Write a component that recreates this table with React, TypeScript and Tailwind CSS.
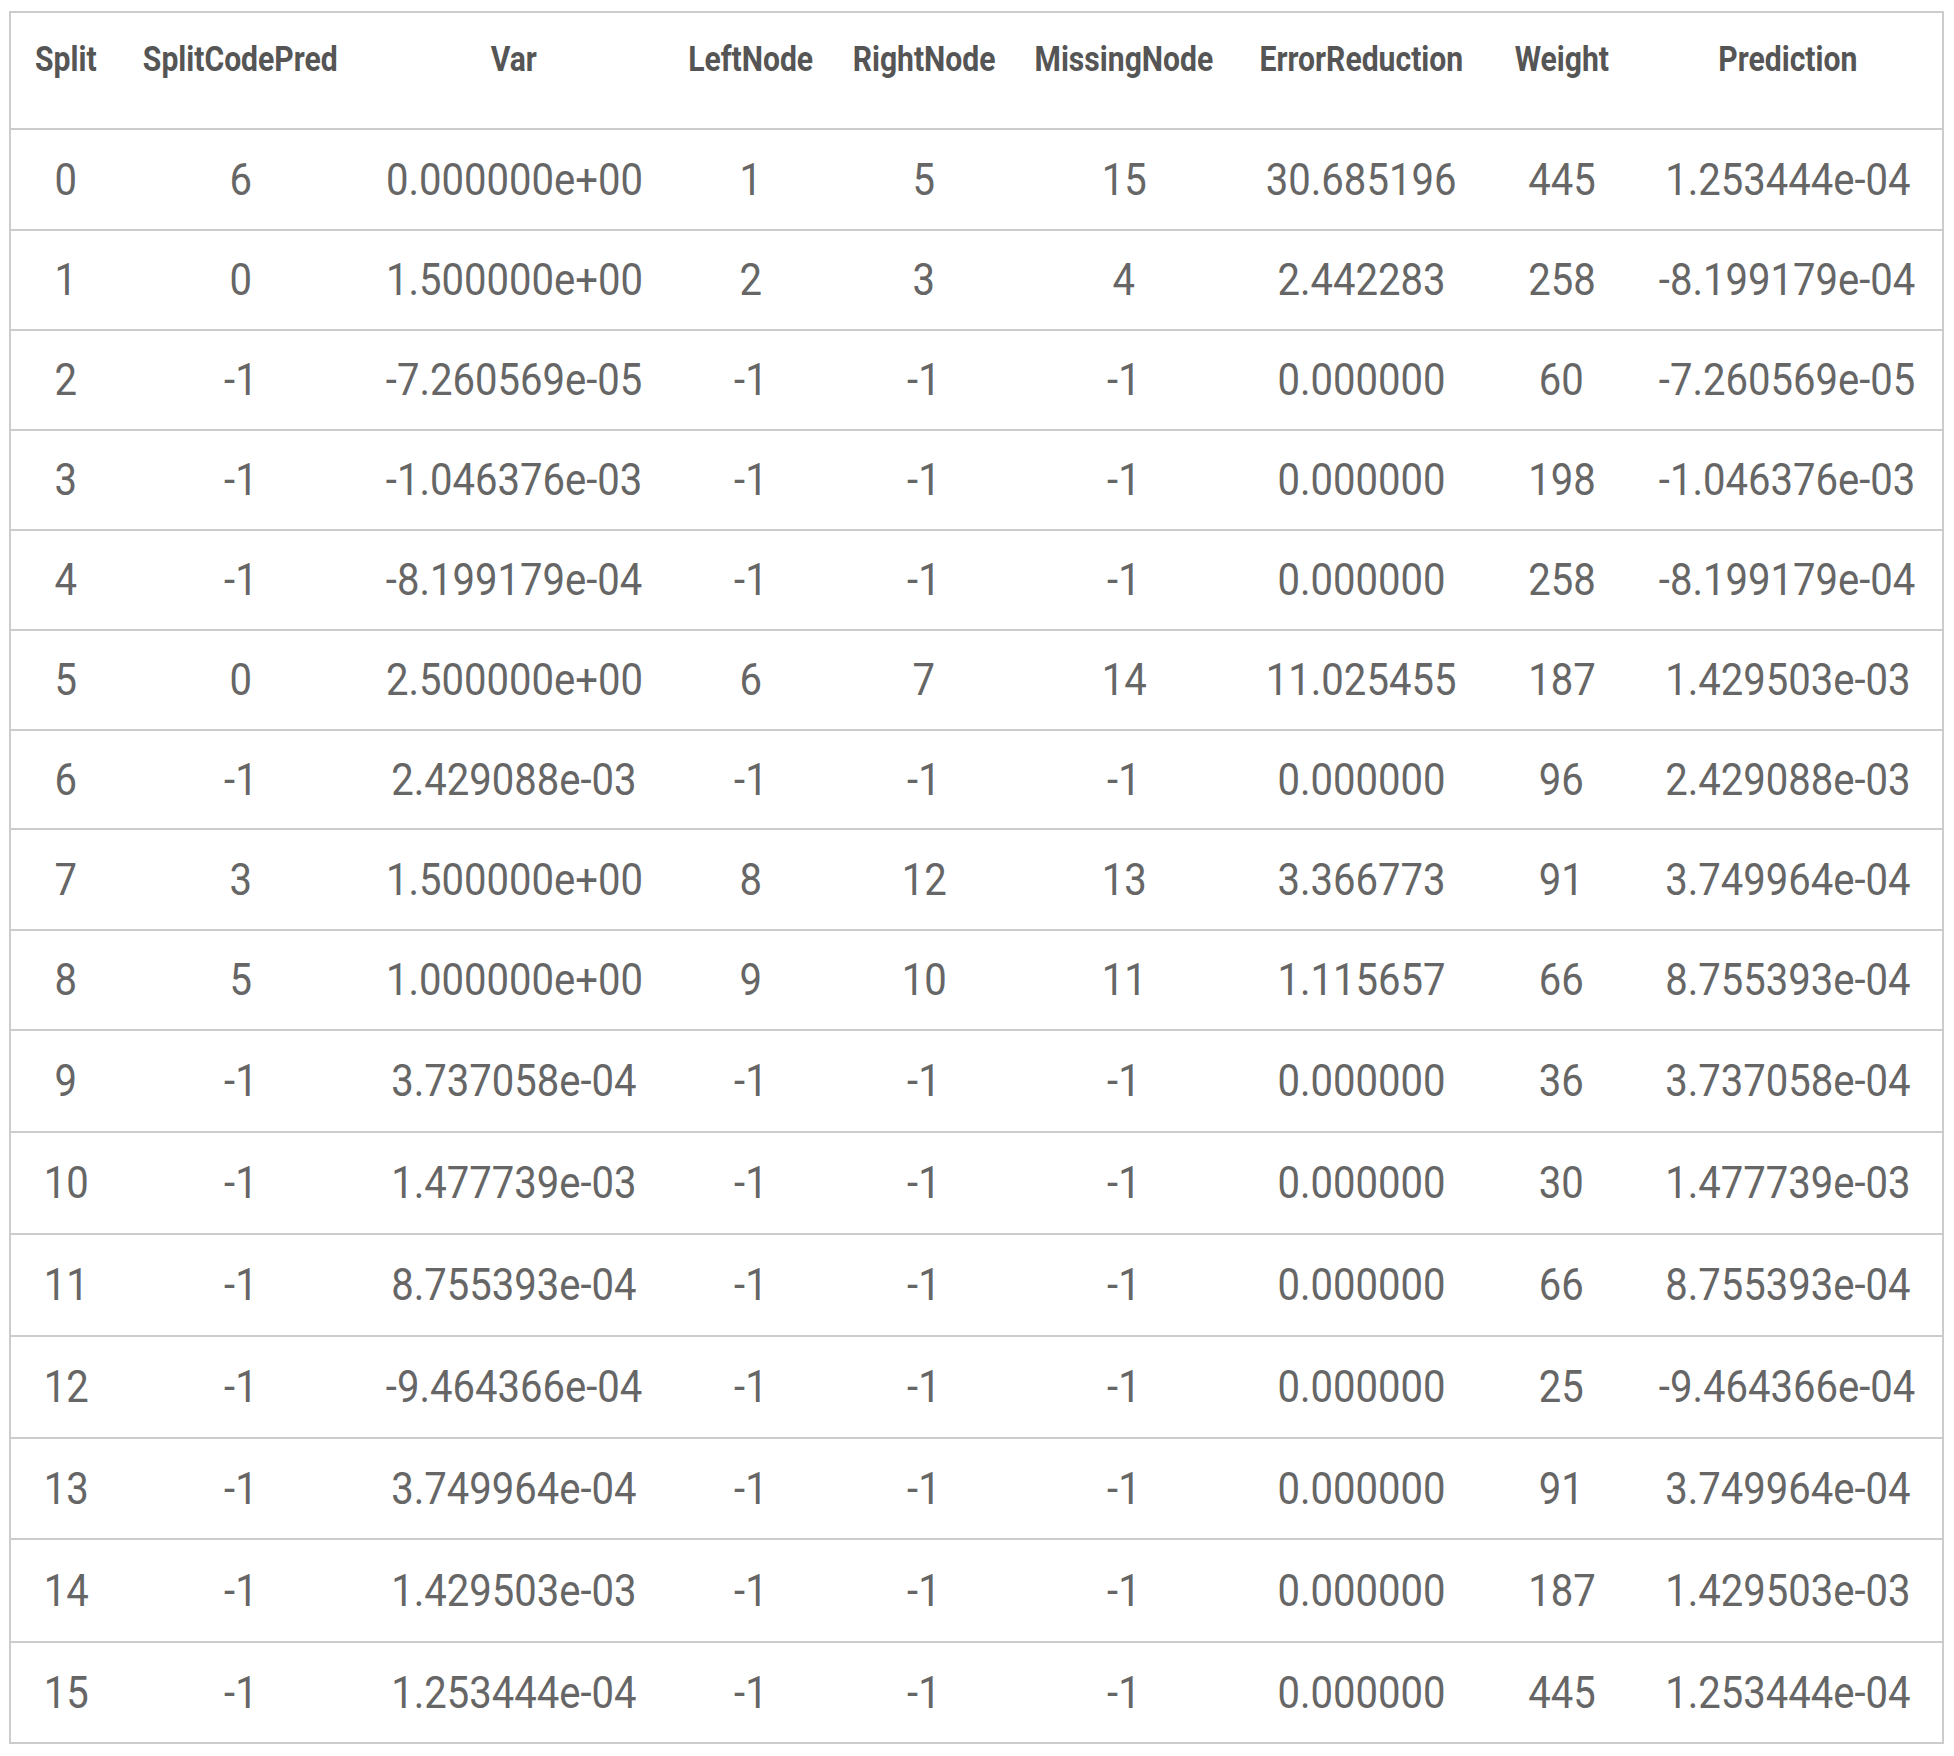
const columns = [
  { name: 'Split', width: 'w-[110px]' },
  { name: 'SplitCodePred', width: 'w-[239px]' },
  { name: 'Var', width: 'w-[308px]' },
  { name: 'LeftNode', width: 'w-[165px]' },
  { name: 'RightNode', width: 'w-[182px]' },
  { name: 'MissingNode', width: 'w-[218px]' },
  { name: 'ErrorReduction', width: 'w-[257px]' },
  { name: 'Weight', width: 'w-[143px]' },
  { name: 'Prediction', width: 'flex-1' },
]

const rows: string[][] = [
  ['0', '6', '0.000000e+00', '1', '5', '15', '30.685196', '445', '1.253444e-04'],
  ['1', '0', '1.500000e+00', '2', '3', '4', '2.442283', '258', '-8.199179e-04'],
  ['2', '-1', '-7.260569e-05', '-1', '-1', '-1', '0.000000', '60', '-7.260569e-05'],
  ['3', '-1', '-1.046376e-03', '-1', '-1', '-1', '0.000000', '198', '-1.046376e-03'],
  ['4', '-1', '-8.199179e-04', '-1', '-1', '-1', '0.000000', '258', '-8.199179e-04'],
  ['5', '0', '2.500000e+00', '6', '7', '14', '11.025455', '187', '1.429503e-03'],
  ['6', '-1', '2.429088e-03', '-1', '-1', '-1', '0.000000', '96', '2.429088e-03'],
  ['7', '3', '1.500000e+00', '8', '12', '13', '3.366773', '91', '3.749964e-04'],
  ['8', '5', '1.000000e+00', '9', '10', '11', '1.115657', '66', '8.755393e-04'],
  ['9', '-1', '3.737058e-04', '-1', '-1', '-1', '0.000000', '36', '3.737058e-04'],
  ['10', '-1', '1.477739e-03', '-1', '-1', '-1', '0.000000', '30', '1.477739e-03'],
  ['11', '-1', '8.755393e-04', '-1', '-1', '-1', '0.000000', '66', '8.755393e-04'],
  ['12', '-1', '-9.464366e-04', '-1', '-1', '-1', '0.000000', '25', '-9.464366e-04'],
  ['13', '-1', '3.749964e-04', '-1', '-1', '-1', '0.000000', '91', '3.749964e-04'],
  ['14', '-1', '1.429503e-03', '-1', '-1', '-1', '0.000000', '187', '1.429503e-03'],
  ['15', '-1', '1.253444e-04', '-1', '-1', '-1', '0.000000', '445', '1.253444e-04'],
]

// row heights measured line to line (last one excludes the outer border)
const heights = [
  'h-[101px]', 'h-[100px]', 'h-[100px]', 'h-[100px]', 'h-[100px]', 'h-[100px]', 'h-[99px]', 'h-[101px]',
  'h-[100px]', 'h-[102px]', 'h-[102px]', 'h-[102px]', 'h-[102px]', 'h-[101px]', 'h-[103px]', 'h-[99px]',
]

export default function App() {
  return (
    <div className="min-h-screen bg-white pl-[9px] pt-[11px] font-['Roboto',sans-serif]">
      <div className="w-[1935px] border-2 border-[#cccccc]">
        <div className="flex h-[117px] border-b-2 border-[#cccccc]">
          {columns.map(c => (
            <div
              key={c.name}
              className={`${c.width} flex items-center justify-center pb-[20px] text-[35px] font-bold text-[#555555]`}
            >
              <span className="inline-block scale-x-[0.86] whitespace-nowrap">{c.name}</span>
            </div>
          ))}
        </div>
        {rows.map((r, i) => (
          <div
            key={i}
            className={`flex ${heights[i]} ${i < rows.length - 1 ? 'border-b-2 border-[#cccccc]' : ''}`}
          >
            {r.map((v, j) => (
              <div
                key={j}
                className={`${columns[j].width} flex items-center justify-center text-[45px] text-[#666666]`}
              >
                <span className="inline-block scale-x-[0.89] whitespace-nowrap">{v}</span>
              </div>
            ))}
          </div>
        ))}
      </div>
    </div>
  )
}
